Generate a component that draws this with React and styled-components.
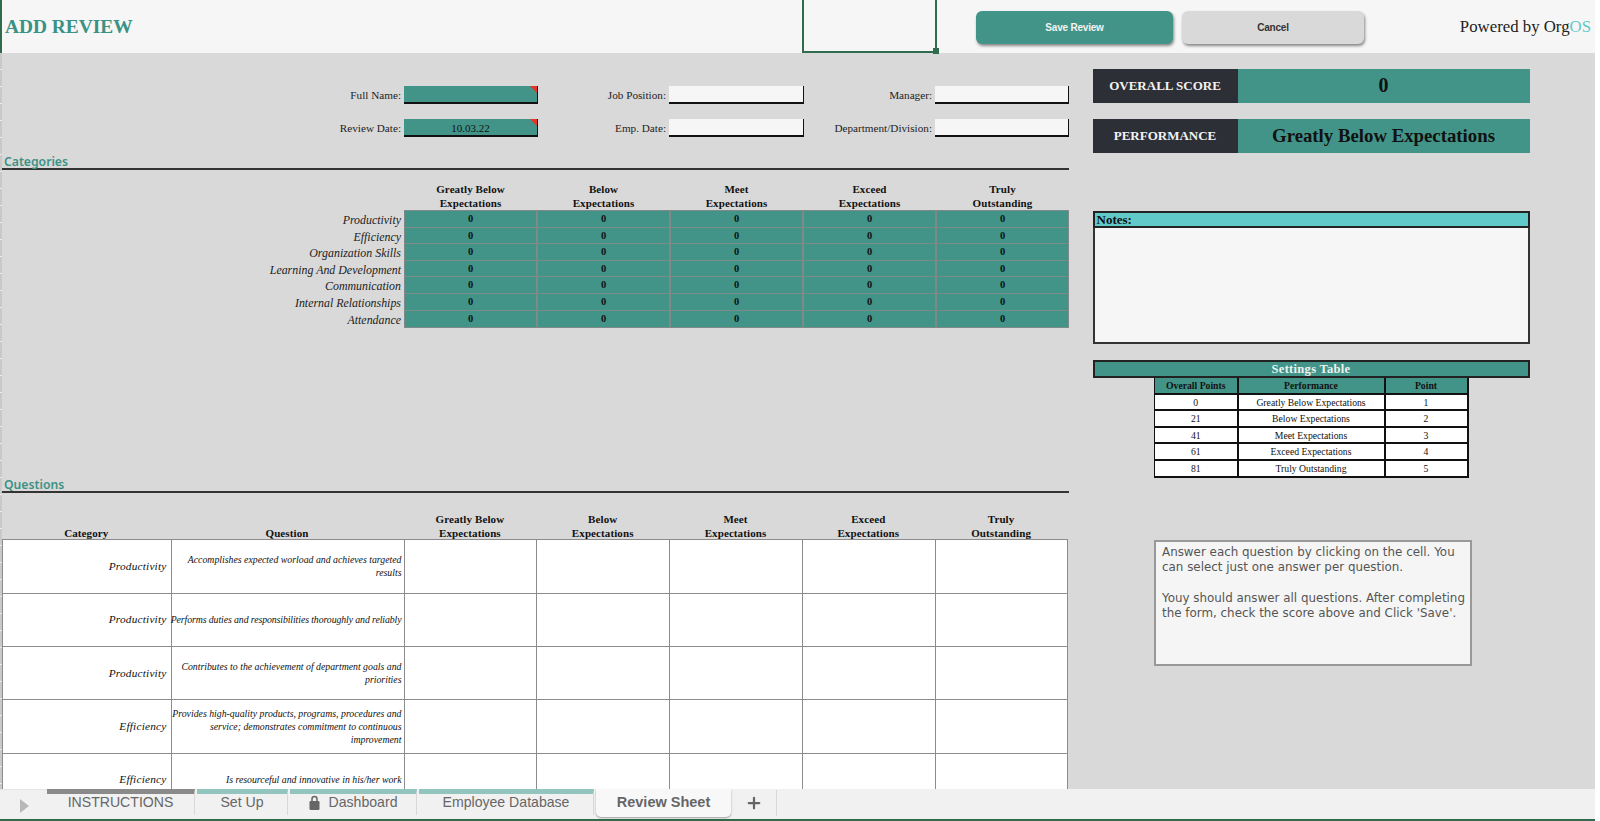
import React from 'react';
import styled, { createGlobalStyle } from 'styled-components';
import { Plus } from 'lucide-react';

const TEAL = '#429488';
const SERIF = '"Liberation Serif", "Times New Roman", serif';
const SANS = '"Liberation Sans", Arial, sans-serif';

const GlobalStyle = createGlobalStyle`
  html, body {
    margin: 0;
    padding: 0;
    background: #fff;
  }
  * {
    box-sizing: border-box;
  }
`;

const Page = styled.div`
  display: flex;
  flex-direction: column;
  width: 1595px;
  height: 821px;
  overflow: hidden;
  font-family: ${SERIF};
  color: #111;
`;

const TopBar = styled.div`
  position: relative;
  z-index: 2;
  display: flex;
  align-items: center;
  flex: 0 0 52px;
  background: #f6f6f6;
  border-left: 2px solid #2f6b4c;
`;

const PageTitle = styled.div`
  width: 800px;
  padding-left: 3px;
  font-size: 19.4px;
  font-weight: bold;
  color: #3a9285;
`;

const SelectedCell = styled.div`
  position: relative;
  align-self: flex-start;
  width: 135px;
  height: 53px;
  margin-right: 39px;
  border: 2px solid #2f6b4c;
  border-top: 0;

  &::after {
    content: '';
    position: absolute;
    right: -4px;
    bottom: -3px;
    width: 6px;
    height: 6px;
    background: #2f6b4c;
  }
`;

const ActionButton = styled.div`
  display: flex;
  align-items: center;
  justify-content: center;
  width: ${props => props.$width}px;
  height: 33px;
  margin-top: 1px;
  margin-right: ${props => props.$gap}px;
  border-radius: 6px;
  background: ${props => (props.$primary ? TEAL : '#d9d9d9')};
  color: ${props => (props.$primary ? '#f2f2f2' : '#333')};
  box-shadow: 1px 2px 3px rgba(0, 0, 0, 0.45);
  font-family: ${SANS};
  font-size: 10px;
  font-weight: bold;
  letter-spacing: -0.2px;
`;

const Powered = styled.div`
  margin-left: auto;
  padding-right: 4px;
  font-size: 16.8px;
  color: #222;

  span {
    color: #62c9c9;
  }
`;

const Sheet = styled.div`
  display: flex;
  flex: 1;
  min-height: 0;
  padding-left: 2px;
  overflow: hidden;
  background-color: #d9d9d9;
  background-image: repeating-linear-gradient(
    to bottom,
    #c9c9c9 0,
    #c9c9c9 16px,
    #ececec 16px,
    #ececec 17px
  );
  background-size: 2px 100%;
  background-repeat: no-repeat;
`;

const LeftColumn = styled.div`
  flex: 0 0 1067px;
  padding-top: 33px;
`;

const RightColumn = styled.div`
  flex: 0 0 437px;
  margin-left: 23.5px;
  padding-top: 16.4px;
`;

const FormGrid = styled.div`
  display: grid;
  grid-template-columns: 402px 134px 131px 135px 131px 134px;
  grid-auto-rows: 18px;
  row-gap: 15px;
`;

const FieldLabel = styled.div`
  padding-right: 3px;
  font-size: 11.2px;
  line-height: 18px;
  text-align: right;
  color: #222;
`;

const Field = styled.div`
  position: relative;
  border-right: 1.5px solid #111;
  border-bottom: 2px solid #111;
  background: ${props => (props.$filled ? TEAL : '#f6f6f6')};
  font-size: 11px;
  line-height: 18px;
  text-align: center;

  &::after {
    content: '';
    display: ${props => (props.$filled ? 'block' : 'none')};
    position: absolute;
    top: 0;
    right: 0;
    border-top: 7px solid #e5352b;
    border-left: 7px solid transparent;
  }
`;

const SectionTitle = styled.div`
  display: flex;
  align-items: flex-end;
  height: ${props => props.$height}px;
  padding-left: 2px;
  border-bottom: 2px solid #333;
  font-family: "Noto Sans", sans-serif;
  font-size: 12.2px;
  font-weight: 600;
  line-height: 13px;
  color: #3a9285;
`;

const CategoryHead = styled.div`
  display: grid;
  grid-template-columns: 402px repeat(5, 133px);
  align-items: end;
  height: 40px;
`;

const QuestionHead = styled.div`
  display: grid;
  grid-template-columns: 168.5px 233px repeat(5, 132.8px);
  align-items: end;
  height: 47px;
  margin-bottom: -1px;
`;

const HeadCell = styled.div`
  font-size: 11px;
  font-weight: bold;
  line-height: 14px;
  letter-spacing: 0.1px;
  text-align: center;
  white-space: pre-line;
`;

const CategoryRow = styled.div`
  display: grid;
  grid-template-columns: 402px repeat(5, 133px);
  height: 16.6px;
`;

const CategoryName = styled.div`
  padding: 2px 3px 0 0;
  font-size: 11.9px;
  font-style: italic;
  line-height: 16.6px;
  text-align: right;
  color: #222;
`;

const ScoreCell = styled.div`
  border: 0.5px solid #7d8a87;
  background: ${TEAL};
  font-size: 10.5px;
  font-weight: bold;
  line-height: 16px;
  text-align: center;
`;

const QuestionRow = styled.div`
  display: grid;
  grid-template-columns: 168.5px 233px repeat(5, 132.8px);
  height: 53.4px;
`;

const QuestionCell = styled.div`
  display: flex;
  align-items: center;
  justify-content: flex-end;
  padding: 0 ${props => (props.$small ? 2 : 4)}px 0 0;
  border: 1px solid #8c8c8c;
  margin: 0 -1px -1px 0;
  background: #fff;
  font-style: italic;
  font-size: ${props => (props.$small ? 9.8 : 11.3)}px;
  line-height: 13px;
  text-align: right;
  letter-spacing: ${props => (props.$small ? (props.$oneLine ? -0.09 : 0) : 0.2)}px;
  white-space: ${props => (props.$oneLine ? 'nowrap' : 'normal')};
`;

const ScoreRow = styled.div`
  display: flex;
  height: 33.6px;
  margin-bottom: 16.4px;
`;

const ScoreLabel = styled.div`
  flex: 0 0 145px;
  background: #2d2f36;
  color: #f2f2f2;
  font-size: 13px;
  font-weight: bold;
  line-height: 33px;
  text-align: center;
`;

const ScoreValue = styled.div`
  flex: 1;
  background: ${TEAL};
  font-size: ${props => props.$size}px;
  font-weight: bold;
  line-height: 33px;
  text-align: center;
`;

const NotesHead = styled.div`
  height: 17px;
  margin-top: 58px;
  padding-left: 2px;
  border: 2px solid #222;
  background: #62c9c9;
  font-size: 13px;
  font-weight: bold;
  line-height: 14px;
`;

const NotesBody = styled.div`
  height: 116px;
  border: 2px solid #333;
  border-top: 0;
  background: #f6f6f6;
`;

const SettingsHead = styled.div`
  height: 18px;
  margin-top: 16px;
  border: 2px solid #222;
  background: ${TEAL};
  color: #eef3f1;
  font-size: 12.5px;
  font-weight: bold;
  line-height: 15px;
  letter-spacing: 0.3px;
  text-align: center;
`;

const SettingsTable = styled.div`
  display: grid;
  grid-template-columns: 83.5px 147px 83px;
  grid-auto-rows: 16.6px;
  width: 315px;
  margin-left: 61.5px;
  border-left: 1.5px solid #111;
`;

const SettingsCell = styled.div`
  border-right: 2px solid #111;
  border-bottom: 2px solid #111;
  background: ${props => (props.$head ? TEAL : '#fff')};
  font-size: 9.7px;
  font-weight: ${props => (props.$head ? 'bold' : 'normal')};
  line-height: 16.5px;
  text-align: center;
`;

const HelpBox = styled.div`
  width: 318px;
  height: 126px;
  margin: 62px 0 0 61.5px;
  padding: 3px 0 4px 6px;
  border: 2px solid #999;
  background: #f5f5f5;
  font-family: "DejaVu Sans", Verdana, sans-serif;
  font-size: 11.9px;
  line-height: 15.2px;
  color: #555;

  p {
    margin: 0 0 16px;
  }
`;

const TabBar = styled.div`
  position: relative;
  z-index: 2;
  display: flex;
  flex: 0 0 32px;
  border-bottom: 2px solid #2f6b4c;
  background: #f1f1f1;
`;

const TabNav = styled.div`
  display: flex;
  align-items: center;
  width: 47px;
  padding: 2px 0 0 20px;
  border-top: 1px solid #e4e4e4;

  &::after {
    content: '';
    border-top: 7px solid transparent;
    border-bottom: 7px solid transparent;
    border-left: 9px solid #b8b8b8;
  }
`;

const Tab = styled.div`
  display: flex;
  align-items: center;
  justify-content: center;
  gap: 9px;
  width: ${props => props.$width}px;
  height: 26px;
  margin-right: 2px;
  padding-bottom: 5px;
  border-top: 5px solid ${props => props.$strip};
  border-right: 1px solid #d8d8d8;
  font-family: ${SANS};
  font-size: 14.1px;
  color: #666;
`;

const ActiveTab = styled.div`
  display: flex;
  align-items: center;
  justify-content: center;
  width: 135px;
  height: 28px;
  padding-bottom: 2px;
  border-radius: 0 0 5px 5px;
  background: #f8f8f8;
  box-shadow: 0 1px 2px rgba(0, 0, 0, 0.35);
  font-family: ${SANS};
  font-size: 14.5px;
  font-weight: bold;
  color: #666;
`;

const AddTab = styled.div`
  display: flex;
  align-items: center;
  justify-content: center;
  width: 46px;
  height: 26px;
  margin-top: 1px;
  border-right: 1px solid #d8d8d8;
  color: #666;
`;

const LockIcon = () => (
  <svg width="11" height="15" viewBox="0 0 11 15" aria-hidden="true">
    <path d="M3 6V4a2.5 2.5 0 0 1 5 0v2" fill="none" stroke="#666" strokeWidth="1.5" />
    <rect x="0.5" y="6" width="10" height="9" rx="1.2" fill="#666" />
  </svg>
);

const columns = ['Greatly Below\nExpectations', 'Below\nExpectations', 'Meet\nExpectations', 'Exceed\nExpectations', 'Truly\nOutstanding'];

const categories = ['Productivity', 'Efficiency', 'Organization Skills', 'Learning And Development', 'Communication', 'Internal Relationships', 'Attendance'];

const questions = [
  ['Productivity', 'Accomplishes expected worload and achieves targeted results'],
  ['Productivity', 'Performs duties and responsibilities thoroughly and reliably', true],
  ['Productivity', 'Contributes to the achievement of department goals and priorities'],
  ['Efficiency', 'Provides high-quality products, programs, procedures and service; demonstrates commitment to continuous improvement'],
  ['Efficiency', 'Is resourceful and innovative in his/her work'],
];

const settings = [
  ['0', 'Greatly Below Expectations', '1'],
  ['21', 'Below Expectations', '2'],
  ['41', 'Meet Expectations', '3'],
  ['61', 'Exceed Expectations', '4'],
  ['81', 'Truly Outstanding', '5'],
];

const App = () => (
  <Page>
    <GlobalStyle />
    <TopBar>
      <PageTitle>ADD REVIEW</PageTitle>
      <SelectedCell />
      <ActionButton $primary $width={197} $gap={9}>Save Review</ActionButton>
      <ActionButton $width={182} $gap={0}>Cancel</ActionButton>
      <Powered>Powered by Org<span>OS</span></Powered>
    </TopBar>

    <Sheet>
      <LeftColumn>
        <FormGrid>
          <FieldLabel>Full Name:</FieldLabel>
          <Field $filled />
          <FieldLabel>Job Position:</FieldLabel>
          <Field />
          <FieldLabel>Manager:</FieldLabel>
          <Field />
          <FieldLabel>Review Date:</FieldLabel>
          <Field $filled>10.03.22</Field>
          <FieldLabel>Emp. Date:</FieldLabel>
          <Field />
          <FieldLabel>Department/Division:</FieldLabel>
          <Field />
        </FormGrid>

        <SectionTitle $height={33}>Categories</SectionTitle>
        <CategoryHead>
          <div />
          {columns.map(c => <HeadCell key={c}>{c}</HeadCell>)}
        </CategoryHead>
        {categories.map(name => (
          <CategoryRow key={name}>
            <CategoryName>{name}</CategoryName>
            {columns.map(c => <ScoreCell key={c}>0</ScoreCell>)}
          </CategoryRow>
        ))}

        <SectionTitle $height={167}>Questions</SectionTitle>
        <QuestionHead>
          <HeadCell>Category</HeadCell>
          <HeadCell>Question</HeadCell>
          {columns.map(c => <HeadCell key={c}>{c}</HeadCell>)}
        </QuestionHead>
        {questions.map(([category, text, oneLine]) => (
          <QuestionRow key={text}>
            <QuestionCell>{category}</QuestionCell>
            <QuestionCell $small $oneLine={oneLine}>{text}</QuestionCell>
            {columns.map(c => <QuestionCell key={c} />)}
          </QuestionRow>
        ))}
      </LeftColumn>

      <RightColumn>
        <ScoreRow>
          <ScoreLabel>OVERALL SCORE</ScoreLabel>
          <ScoreValue $size={20}>0</ScoreValue>
        </ScoreRow>
        <ScoreRow>
          <ScoreLabel>PERFORMANCE</ScoreLabel>
          <ScoreValue $size={18.8}>Greatly Below Expectations</ScoreValue>
        </ScoreRow>

        <NotesHead>Notes:</NotesHead>
        <NotesBody />

        <SettingsHead>Settings Table</SettingsHead>
        <SettingsTable>
          <SettingsCell $head>Overall Points</SettingsCell>
          <SettingsCell $head>Performance</SettingsCell>
          <SettingsCell $head>Point</SettingsCell>
          {settings.map(row => row.map(value => (
            <SettingsCell key={value}>{value}</SettingsCell>
          )))}
        </SettingsTable>

        <HelpBox>
          <p>Answer each question by clicking on the cell. You can select just one answer per question.</p>
          <p>Youy should answer all questions. After completing the form, check the score above and Click 'Save'.</p>
        </HelpBox>
      </RightColumn>
    </Sheet>

    <TabBar>
      <TabNav />
      <Tab $width={148} $strip="#8a8a8a">INSTRUCTIONS</Tab>
      <Tab $width={91} $strip="#92c5bd">Set Up</Tab>
      <Tab $width={127} $strip="#92c5bd"><LockIcon />Dashboard</Tab>
      <Tab $width={175} $strip="#92c5bd">Employee Database</Tab>
      <ActiveTab>Review Sheet</ActiveTab>
      <AddTab><Plus size={18} strokeWidth={3} /></AddTab>
    </TabBar>
  </Page>
);

export default App;
